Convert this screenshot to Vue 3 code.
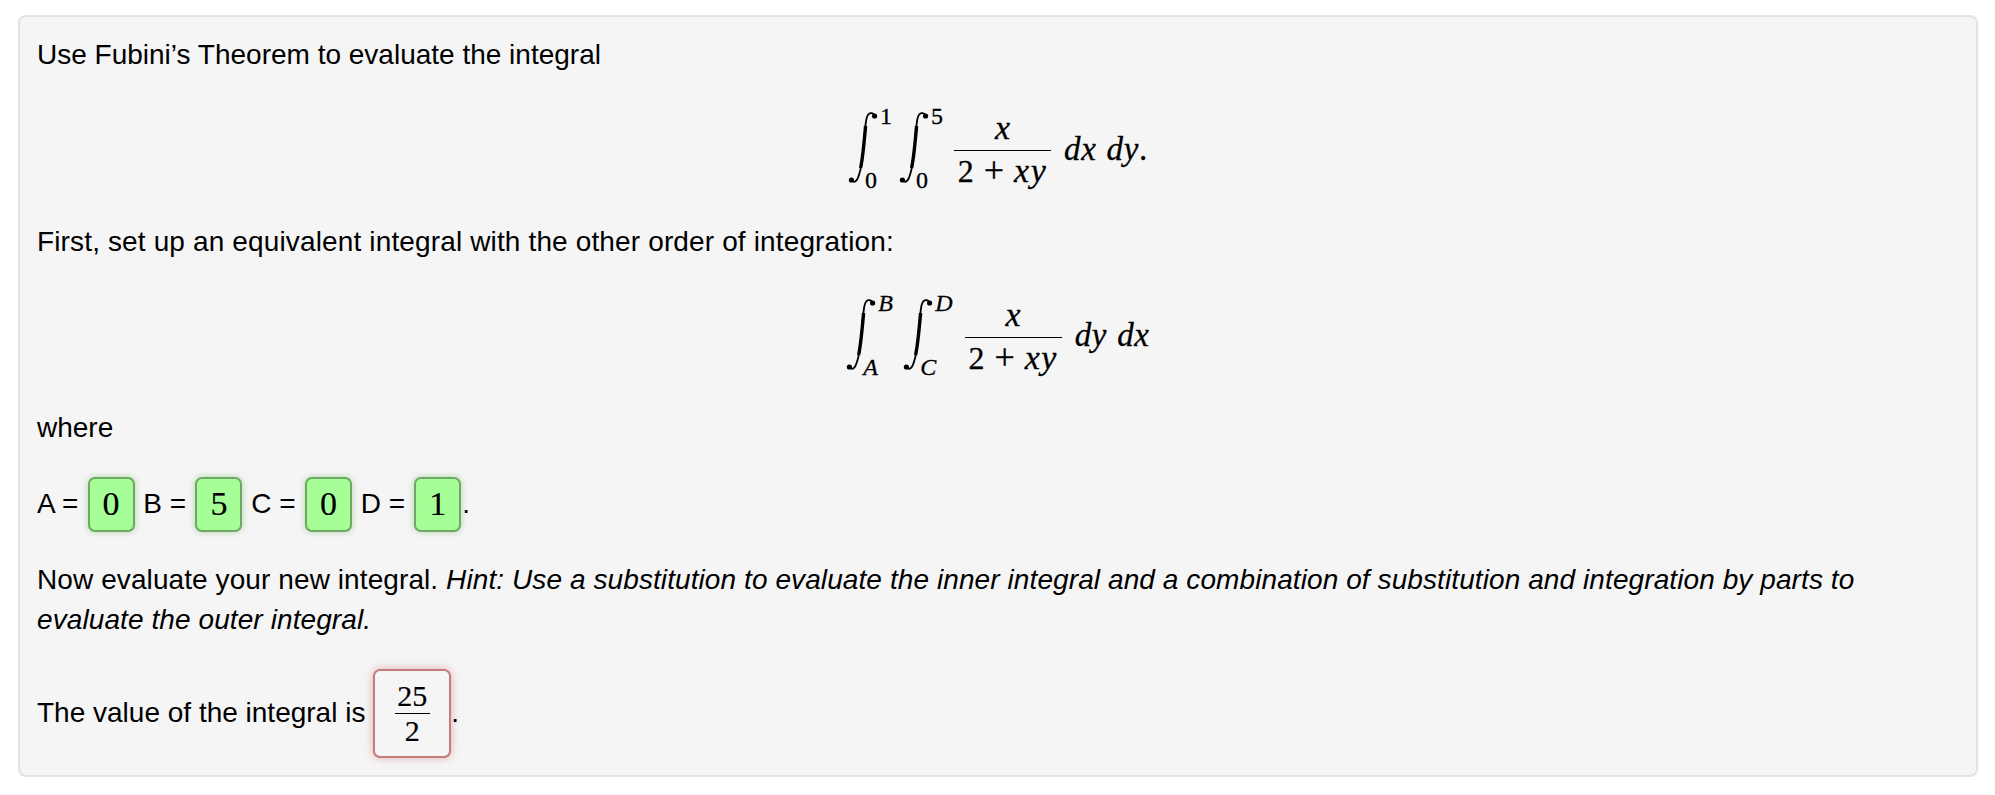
<script setup>
const first = [
  { sup: '1', sub: '0' },
  { sup: '5', sub: '0' },
]
const second = [
  { sup: 'B', sub: 'A' },
  { sup: 'D', sub: 'C' },
]
const answers = [
  { label: 'A', value: '0' },
  { label: 'B', value: '5' },
  { label: 'C', value: '0' },
  { label: 'D', value: '1' },
]
</script>

<template>
  <main class="card">
    <p class="line">Use Fubini’s Theorem to evaluate the integral</p>

    <div class="math">
      <div v-for="(item, i) in first" :key="i" class="int">
        <svg class="sign" viewBox="0 0 30 74" aria-hidden="true">
          <path class="hook" d="M27 5C24.5 0.5 20 1 18.4 8C16 20 15.5 50 11.5 62C9.5 70 6.5 73 3 69" />
          <path class="stem" d="M17.6 15C16.4 28 15 46 12.6 57" />
          <circle cx="26.6" cy="5" r="2.6" />
          <circle cx="3.4" cy="69" r="2.6" />
        </svg>
        <div class="limits up">
          <span class="sup">{{ item.sup }}</span>
          <span class="sub">{{ item.sub }}</span>
        </div>
      </div>
      <div class="frac">
        <span class="num"><i>x</i></span>
        <span class="den">2 <span class="plus">+</span> <i>xy</i></span>
      </div>
      <span class="diff"><i>dx dy</i>.</span>
    </div>

    <p class="line wide">First, set up an equivalent integral with the other order of integration:</p>

    <div class="math second">
      <div v-for="(item, i) in second" :key="i" class="int">
        <svg class="sign" viewBox="0 0 30 74" aria-hidden="true">
          <path class="hook" d="M27 5C24.5 0.5 20 1 18.4 8C16 20 15.5 50 11.5 62C9.5 70 6.5 73 3 69" />
          <path class="stem" d="M17.6 15C16.4 28 15 46 12.6 57" />
          <circle cx="26.6" cy="5" r="2.6" />
          <circle cx="3.4" cy="69" r="2.6" />
        </svg>
        <div class="limits">
          <span class="sup">{{ item.sup }}</span>
          <span class="sub">{{ item.sub }}</span>
        </div>
      </div>
      <div class="frac">
        <span class="num"><i>x</i></span>
        <span class="den">2 <span class="plus">+</span> <i>xy</i></span>
      </div>
      <span class="diff"><i>dy dx</i></span>
    </div>

    <p class="line">where</p>

    <p class="answers">
      <template v-for="(a, i) in answers" :key="a.label">{{ i ? ' ' : '' }}<span class="lab">{{ a.label }}</span> = <span class="box ok">{{ a.value }}</span></template><span class="dot">.</span>
    </p>

    <p class="hint">
      Now evaluate your new integral. <em>Hint: Use a substitution to evaluate the inner integral and a combination of substitution and integration by parts to evaluate the outer integral.</em>
    </p>

    <p class="result">
      The value of the integral is <span class="box bad"><span class="small-frac"><span>25</span><span class="low">2</span></span></span><span class="dot2">.</span>
    </p>
  </main>
</template>

<style>
html, body { margin: 0; background: #fff; }
</style>

<style scoped>
.card {
  box-sizing: border-box;
  width: 1960px;
  margin: 15px 0 0 18px;
  padding: 18px 17px;
  background: #f5f5f5;
  border: 2px solid #e3e3e3;
  border-radius: 8px;
  font-family: "Liberation Sans", Arial, sans-serif;
  font-size: 28px;
  line-height: 40px;
  color: #000;
}
p { margin: 0; }
.wide { letter-spacing: 0.14px; }
.math {
  box-sizing: border-box;
  height: 147px;
  padding-top: 4px;
  display: flex;
  align-items: center;
  justify-content: center;
  font-family: "Liberation Serif", "Times New Roman", serif;
  font-size: 32px;
  line-height: 36px;
  -webkit-text-stroke: 0.3px #000;
}
.second { height: 146px; }
.int { display: flex; align-items: stretch; margin-right: 7px; }
.second .int { margin-right: 9px; }
.sign { width: 30px; height: 74px; display: block; fill: #000; stroke: none; }
.hook { fill: none; stroke: #000; stroke-width: 1.8; }
.stem { fill: none; stroke: #000; stroke-width: 3.4; }
.limits {
  margin-left: -13px;
  display: flex;
  flex-direction: column;
  justify-content: space-between;
  font-size: 24px;
  line-height: 20px;
  font-style: italic;
  height: 84px;
  margin-top: -5px;
}
.limits.up { font-style: normal; }
.sup { padding-left: 15px; min-width: 12px; }
.second .sup { min-width: 16px; }
.sub { width: 16px; }
.frac {
  width: 97px;
  margin: 0 13px 0 4px;
  display: flex;
  flex-direction: column;
  align-items: center;
}
.second .frac { margin-left: 3px; }
.num { height: 38px; line-height: 32px; font-size: 34px; }
.den {
  align-self: stretch;
  text-align: center;
  height: 38px;
  line-height: 38px;
  border-top: 1px solid #000;
  word-spacing: 2px;
  white-space: nowrap;
}
.plus { font-size: 36px; }
.den i { letter-spacing: 1.5px; font-size: 34px; }
.diff {
  font-size: 33px;
  letter-spacing: 0.7px;
  word-spacing: 1px;
  white-space: nowrap;
  margin-bottom: 4px;
}
.answers { margin-top: 28px; height: 55px; line-height: 55px; }
.lab { margin-left: 1px; }
.lab:first-child { margin-left: 0; }
.box {
  display: inline-flex;
  align-items: center;
  justify-content: center;
  box-sizing: border-box;
  vertical-align: middle;
  border-radius: 7px;
  font-family: "Liberation Serif", "Times New Roman", serif;
  -webkit-text-stroke: 0.2px #000;
}
.ok {
  width: 47px;
  height: 55px;
  margin: 0 0 3px 1.5px;
  padding-bottom: 2px;
  background: #a6ff96;
  border: 2px solid #6fa866;
  box-shadow: 0 0 6px rgba(90, 170, 70, 0.45);
  font-size: 34px;
}
.dot { margin-left: 1px; }
.dot2 { margin-left: 0; }
.bad {
  width: 78px;
  height: 89px;
  margin-bottom: 3px;
  background: #f5f5f5;
  border: 2px solid #c77a7a;
  box-shadow: 0 0 8px rgba(200, 90, 90, 0.45);
  font-size: 30px;
  line-height: 34px;
}
.small-frac { display: flex; flex-direction: column; align-items: center; width: 35px; }
.low { align-self: stretch; text-align: center; border-top: 1px solid #000; }
.hint { margin-top: 29px; letter-spacing: 0.09px; }
.result { margin-top: 28px; height: 89px; line-height: 89px; }
</style>
